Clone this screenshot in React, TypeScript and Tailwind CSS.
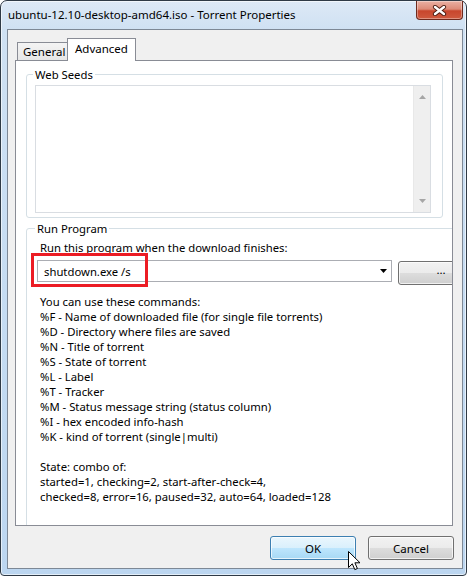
import React from 'react'

const font = "font-['Noto_Sans',sans-serif]"

const commands = [
  'You can use these commands:',
  '%F - Name of downloaded file (for single file torrents)',
  '%D - Directory where files are saved',
  '%N - Title of torrent',
  '%S - State of torrent',
  '%L - Label',
  '%T - Tracker',
  '%M - Status message string (status column)',
  '%I - hex encoded info-hash',
  '%K - kind of torrent (single|multi)',
  '',
  'State: combo of:',
  'started=1, checking=2, start-after-check=4,',
  'checked=8, error=16, paused=32, auto=64, loaded=128',
]

function CloseButton() {
  return (
    <div className="mr-[3px] flex h-[19px] w-[47px] items-center justify-center rounded-b-[4px] border border-t-0 border-[#6e2a1e] bg-[linear-gradient(to_bottom,#eab0a3_0%,#dd8b78_45%,#c8462d_55%,#cf5a3f_100%)] shadow-[inset_0_0_0_1px_rgba(255,255,255,0.35)]">
      <svg width="15" height="11" viewBox="0 0 15 11">
        <path d="M3 2 L12 9 M12 2 L3 9" stroke="#4b1c12" strokeWidth="4.2" strokeLinecap="round" />
        <path d="M3 2 L12 9 M12 2 L3 9" stroke="#ffffff" strokeWidth="2.4" strokeLinecap="round" />
      </svg>
    </div>
  )
}

function ScrollArrow({ up }: { up?: boolean }) {
  return (
    <svg width="7" height="4" viewBox="0 0 7 4">
      <path d={up ? 'M0 4 L3.5 0 L7 4 Z' : 'M0 0 L3.5 4 L7 0 Z'} fill="#a6a6a6" />
    </svg>
  )
}

function WinButton({ label, active, className = '' }: { label: string; active?: boolean; className?: string }) {
  return (
    <div
      className={`flex h-[24px] w-[86px] items-center justify-center rounded-[3px] border text-[11.5px] leading-[15px] shadow-[inset_0_0_0_1px_rgba(255,255,255,0.7)] ${
        active
          ? 'border-[#3c7fb1] bg-[linear-gradient(to_bottom,#eaf6fd_0%,#d9f0fc_50%,#bee6fd_50%,#a7d9f5_100%)]'
          : 'border-[#707070] bg-[linear-gradient(to_bottom,#f2f2f2_0%,#ebebeb_50%,#dddddd_50%,#cfcfcf_100%)]'
      } ${className}`}
    >
      {label}
    </div>
  )
}

function Cursor() {
  return (
    <svg className="absolute left-[348px] top-[551px]" width="13" height="20" viewBox="0 0 13 20">
      <path
        d="M0.5 0.5 L0.5 16.5 L4.3 12.8 L6.8 18.6 L9.4 17.5 L6.9 11.8 L12 11.8 Z"
        fill="#ffffff"
        stroke="#000000"
        strokeWidth="1"
        strokeLinejoin="miter"
      />
    </svg>
  )
}

export default function App() {
  return (
    <div className={`relative h-[583px] w-[469px] bg-white text-black ${font}`}>
      <div className="flex h-[576px] w-[467px] flex-col rounded-t-[7px] rounded-b-[4px] border border-[#2f3a46] bg-[linear-gradient(to_bottom,#dde9f6_0%,#cfe1f3_28px,#c4dbf2_60%,#bcd6f0_100%)] shadow-[inset_0_0_0_1px_rgba(255,255,255,0.6)]">
        {/* title bar */}
        <div className="flex h-[28px] items-start justify-between">
          <span className="pl-[7px] pt-[6px] text-[11.5px] leading-[15px]">
            ubuntu-12.10-desktop-amd64.iso - Torrent Properties
          </span>
          <CloseButton />
        </div>

        {/* client area */}
        <div className="mb-[6px] ml-[6px] mr-[3px] flex flex-1 flex-col border border-[#7d8896] bg-[#f0f0f0] pl-[7px] pr-[9px] pt-[8px]">
          {/* tabs */}
          <div className="flex h-[22px] items-end text-[11.5px] leading-[15px]">
            <div className="ml-[2px] flex h-[18px] w-[50px] items-center border border-b-0 border-r-0 border-[#898c95] bg-[linear-gradient(to_bottom,#f4f4f4,#e6e6e6)] pl-[5px]">
              General
            </div>
            <div className="relative z-10 -mb-px flex h-[23px] w-[69px] items-start border border-b-0 border-[#898c95] bg-white pl-[7px] pt-[2px]">
              Advanced
            </div>
          </div>

          {/* panel */}
          <div className="h-[466px] overflow-hidden border border-[#898c95] bg-white px-[10px] pr-[9px] pt-[6px] text-[11.3px] leading-[15px]">
            <fieldset className="rounded-[3px] border border-[#d5dfe5] pb-[4px] pl-[6px]">
              <legend className="px-[2px]">Web Seeds</legend>
              <div className="ml-[2px] mt-[3px] flex h-[128px] w-[396px] border border-[#d9dde2] bg-white">
                <div className="flex-1" />
                <div className="flex w-[17px] flex-col items-center justify-between border-l border-[#e8e8e8] bg-[#efefef] py-[9px]">
                  <ScrollArrow up />
                  <ScrollArrow />
                </div>
              </div>
            </fieldset>

            <fieldset className="mt-[3px] h-[310px] rounded-[3px] border border-[#d5dfe5] pl-[6px]">
              <legend className="ml-[2px] px-[2px]">Run Program</legend>
              <div className="ml-[7px] mt-[4px]">Run this program when the download finishes:</div>
              <div className="ml-[4px] mt-[5px] flex items-start">
                <div className="relative flex h-[22px] w-[355px] items-center justify-between border border-[#abadb3] bg-white pl-[6px] pr-[4px]">
                  <span>shutdown.exe /s</span>
                  <svg width="7" height="4" viewBox="0 0 7 4">
                    <path d="M0 0 L7 0 L3.5 4 Z" fill="#000000" />
                  </svg>
                  <div className="absolute -left-[7px] -top-[8px] h-[34px] w-[117px] border-[3px] border-[#ec1c24]" />
                </div>
                <WinButton label="..." className="ml-[6px] mt-px h-[21px] w-[34px] items-start" />
              </div>
              <div className="ml-[7px] mt-[9px]">
                {commands.map((line, i) => (
                  <div key={i} className="h-[15px] whitespace-pre">
                    {line}
                  </div>
                ))}
              </div>
            </fieldset>
          </div>

          {/* buttons */}
          <div className="-mr-px mt-[10px] flex justify-end gap-[12px]">
            <WinButton label="OK" active />
            <WinButton label="Cancel" />
          </div>
        </div>
      </div>
      <Cursor />
    </div>
  )
}
